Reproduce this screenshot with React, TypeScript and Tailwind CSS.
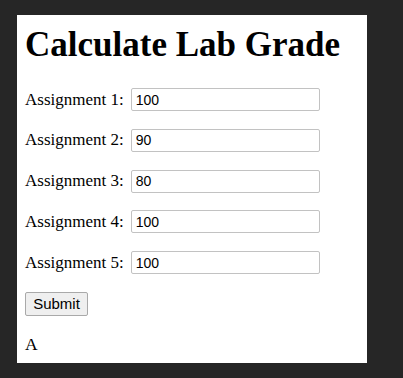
import React from "react";

const rows = [
  ["Assignment 1:", "100"],
  ["Assignment 2:", "90"],
  ["Assignment 3:", "80"],
  ["Assignment 4:", "100"],
  ["Assignment 5:", "100"],
];

export default function App() {
  return (
    <div className="w-full h-[378px] bg-[#262626] pt-[15px] pl-[17px]">
      <div
        className="w-[350px] h-[348px] bg-white px-[8px] text-black"
        style={{ fontFamily: '"Liberation Serif", "Times New Roman", serif' }}
      >
        <h1 className="pt-[10px] text-[35px] leading-[40px] font-bold">Calculate Lab Grade</h1>
        <div className="mt-[23px] flex flex-col gap-[17.75px]">
          {rows.map(([label, value]) => (
            <div key={label} className="flex items-center h-[23px]">
              <span className="text-[17px] leading-[20px]">{label}</span>
              <input
                readOnly
                value={value}
                className="ml-[7px] w-[189px] h-[23px] border border-[#c2c2c2] rounded-[2px] px-[4px] text-[14px] text-black outline-none"
                style={{ fontFamily: '"Liberation Sans", Arial, sans-serif' }}
              />
            </div>
          ))}
        </div>
        <button
          className="mt-[18px] w-[63px] h-[24px] bg-[#efefef] border border-[#a9a9a9] rounded-[2px] text-[15px] leading-[20px] text-black flex items-center justify-center"
          style={{ fontFamily: '"Liberation Sans", Arial, sans-serif' }}
        >
          Submit
        </button>
        <p className="mt-[18px] text-[17.5px] leading-[20px]">A</p>
      </div>
    </div>
  );
}
